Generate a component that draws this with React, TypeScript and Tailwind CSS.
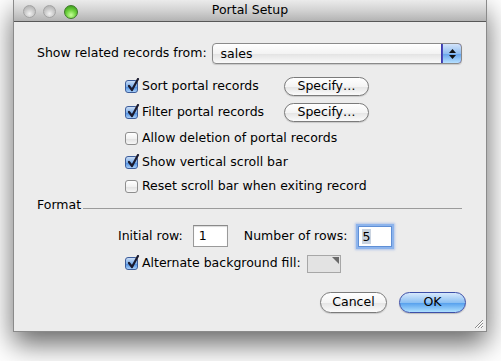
import React from "react";

const font = { fontFamily: '"DejaVu Sans", "Noto Sans", sans-serif' };

function Checkbox({ checked }: { checked: boolean }) {
  if (checked) {
    return (
      <div className="relative w-[13px] h-[13px] rounded-[3px] border border-[#3d5d9a] bg-[linear-gradient(to_bottom,#c9dcf5_0%,#7fb0ea_50%,#4f8fe0_55%,#a9d0fa_100%)] shrink-0">
        <svg className="absolute left-[1px] top-[-3px]" width="13" height="14" viewBox="0 0 13 14">
          <path d="M2 8 L5 12 L11 1" fill="none" stroke="#1a1a2e" strokeWidth="2.2" strokeLinecap="round" strokeLinejoin="round" />
        </svg>
      </div>
    );
  }
  return (
    <div className="w-[13px] h-[13px] rounded-[3px] border border-[#8e8e8e] bg-[linear-gradient(to_bottom,#ffffff_0%,#f1f1f1_50%,#e2e2e2_55%,#f7f7f7_100%)] shrink-0" />
  );
}

function CheckRow({ checked, label, h, button }: { checked: boolean; label: string; h: string; button?: boolean }) {
  return (
    <div className={`flex items-center ${h}`}>
      <Checkbox checked={checked} />
      <span className="ml-[4px] text-[12.5px] text-black w-[142px] whitespace-nowrap">{label}</span>
      {button && (
        <div className="w-[85px] h-[19px] rounded-full border border-[#7b7b7b] bg-[linear-gradient(to_bottom,#ffffff_0%,#f4f4f4_50%,#e6e6e6_55%,#fbfbfb_100%)] flex items-center justify-center text-[12.5px] text-black shadow-[0_1px_1px_rgba(0,0,0,0.15)]">
          Specify…
        </div>
      )}
    </div>
  );
}

export default function App() {
  return (
    <div className="w-[501px] h-[361px] bg-white overflow-hidden relative" style={font}>
      <div className="ml-[13px] w-[474px] h-[332px] flex flex-col bg-[#ececec] border-l border-r border-b border-[#8a8a8a] shadow-[0_12px_26px_rgba(0,0,0,0.6)] relative">
        {/* Title bar */}
        <div className="h-[22px] shrink-0 relative flex items-center justify-center border-b border-[#585858] bg-[linear-gradient(to_bottom,#ebebeb_0%,#d2d2d2_50%,#b3b3b3_100%)]">
          <div className="absolute left-[9px] top-[5px] flex gap-[7px]">
            <div className="w-[13px] h-[13px] rounded-full border border-[#a3a3a3] bg-[radial-gradient(circle_at_50%_70%,#f2f2f2_0%,#cdcdcd_45%,#a9a9a9_100%)]" />
            <div className="w-[13px] h-[13px] rounded-full border border-[#a3a3a3] bg-[radial-gradient(circle_at_50%_70%,#f2f2f2_0%,#cdcdcd_45%,#a9a9a9_100%)]" />
            <div className="w-[14px] h-[14px] ml-[1px] rounded-full border border-[#3f7a2a] bg-[radial-gradient(circle_at_50%_75%,#c7ff9a_0%,#6fd23e_45%,#2e8e12_100%)]" />
          </div>
          <span className="text-[12.5px] text-black">Portal Setup</span>
        </div>

        {/* Body */}
        <div className="flex flex-col pl-[23px] pr-[24px] pt-[21px]">
          <div className="flex items-center h-[21px]">
            <span className="text-[12.5px] text-black whitespace-nowrap">Show related records from:</span>
            <div className="ml-[5px] flex-1 h-[21px] rounded-[4px] border border-[#8a8a8a] flex overflow-hidden bg-[linear-gradient(to_bottom,#ffffff_0%,#f3f3f3_50%,#e4e4e4_55%,#fafafa_100%)] shadow-[0_1px_1px_rgba(0,0,0,0.15)]">
              <span className="flex-1 pl-[8px] text-[12.5px] text-black leading-[19px]">sales</span>
              <div className="w-[19px] h-full border-l border-[#4a4ab8] bg-[linear-gradient(to_bottom,#d3e4fa_0%,#90bdf0_50%,#6aa6ec_55%,#b6e0ff_100%)] flex flex-col items-center justify-center gap-[2px] rounded-r-[3px] outline outline-1 outline-[#3c3cb0]">
                <svg width="7" height="4" viewBox="0 0 7 4"><path d="M3.5 0 L7 4 L0 4 Z" fill="#111" /></svg>
                <svg width="7" height="4" viewBox="0 0 7 4"><path d="M0 0 L7 0 L3.5 4 Z" fill="#111" /></svg>
              </div>
            </div>
          </div>

          <div className="flex flex-col pl-[88px] mt-[10px]">
            <CheckRow checked label="Sort portal records" h="h-[25px]" button />
            <CheckRow checked label="Filter portal records" h="h-[27px]" button />
            <CheckRow checked={false} label="Allow deletion of portal records" h="h-[25px]" />
            <CheckRow checked label="Show vertical scroll bar" h="h-[23px]" />
            <CheckRow checked={false} label="Reset scroll bar when exiting record" h="h-[24px]" />
          </div>

          <div className="flex items-center h-[14px]">
            <span className="text-[12.5px] text-black">Format</span>
            <div className="flex-1 h-px bg-[#9b9b9b] mt-[6px] ml-[2px]" />
          </div>

          <div className="flex items-center h-[22px] mt-[13px] pl-[81px]">
            <span className="text-[12.5px] text-black whitespace-nowrap">Initial row:</span>
            <div className="ml-[10px] w-[35px] h-[22px] bg-white border border-[#9a9a9a] border-t-[#8a8a8a] flex items-center pl-[5px] text-[12.5px] text-black shadow-[inset_0_1px_1px_rgba(0,0,0,0.15)]">1</div>
            <span className="ml-[16px] text-[12.5px] text-black whitespace-nowrap">Number of rows:</span>
            <div className="ml-[10px] w-[34px] h-[21px] bg-white border border-[#5f8fd6] flex items-center pl-[3px] text-[12.5px] text-black shadow-[0_0_0_2px_#8db4ec,0_0_2px_3px_rgba(120,160,230,0.5)]">
              <span className="bg-[#c9d3e0] px-[1px] leading-[15px]">5</span>
            </div>
          </div>

          <div className="flex items-center h-[19px] mt-[7px] pl-[88px]">
            <Checkbox checked />
            <span className="ml-[4px] text-[12.5px] text-black whitespace-nowrap">Alternate background fill:</span>
            <div className="ml-[6px] w-[34px] h-[18px] border border-[#a7a7a7] bg-[#e3e3e3] relative">
              <svg className="absolute right-[1px] top-[1px]" width="7" height="7" viewBox="0 0 7 7"><path d="M0 0 L7 0 L7 7 Z" fill="#6a6a6a" /></svg>
            </div>
          </div>

          <div className="flex justify-end items-center mt-[19px] gap-[12px] mr-[-4px]">
            <div className="w-[67px] h-[21px] rounded-full border border-[#7b7b7b] bg-[linear-gradient(to_bottom,#ffffff_0%,#f4f4f4_50%,#e6e6e6_55%,#fbfbfb_100%)] flex items-center justify-center text-[12.5px] text-black shadow-[0_1px_1px_rgba(0,0,0,0.15)]">Cancel</div>
            <div className="w-[67px] h-[21px] rounded-full border border-[#3d4fa8] bg-[linear-gradient(to_bottom,#d7e9fc_0%,#8cc0f3_50%,#5aa3ee_55%,#aee0ff_100%)] flex items-center justify-center text-[12.5px] text-black shadow-[0_1px_1px_rgba(0,0,0,0.2)]">OK</div>
          </div>
        </div>

        <svg className="absolute right-[2px] bottom-[2px]" width="11" height="11" viewBox="0 0 11 11">
          <path d="M10 2 L2 10 M10 5 L5 10 M10 8 L8 10" stroke="#8a8a8a" strokeWidth="1" />
          <path d="M10 3 L3 10 M10 6 L6 10 M10 9 L9 10" stroke="#ffffff" strokeWidth="1" />
        </svg>
      </div>
    </div>
  );
}
